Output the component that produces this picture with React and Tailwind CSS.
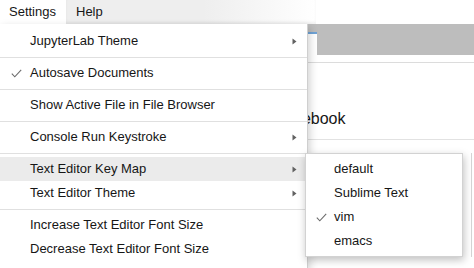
const font = { fontFamily: '"Liberation Sans", Arial, sans-serif' };

function Check() {
  return (
    <svg width="11" height="9" viewBox="0 0 11 9" fill="none">
      <path d="M0.8 4.6 L3.8 7.8 L10.2 0.8" stroke="#6b6b6b" strokeWidth="1.1" />
    </svg>
  );
}

function Arrow() {
  return (
    <svg width="5" height="7" viewBox="0 0 5 7">
      <path d="M0.5 0.5 L4.5 3.5 L0.5 6.5 Z" fill="#616161" />
    </svg>
  );
}

function Item({ label, checked, submenu, active }) {
  return (
    <div className={`flex h-6 items-center pr-[10px] ${active ? "bg-[#ebebeb]" : ""}`}>
      <span className="flex w-[30px] justify-center pl-[2px] pt-px">{checked && <Check />}</span>
      <span className="flex-1 text-[13px] text-[#161616]">{label}</span>
      {submenu && <Arrow />}
    </div>
  );
}

function Sep() {
  return <div className="mt-1 mb-[3px] h-px bg-[#e0e0e0]" />;
}

const keyMaps = [
  { label: "default" },
  { label: "Sublime Text" },
  { label: "vim", checked: true },
  { label: "emacs" },
];

export default function App() {
  return (
    <div className="relative h-[268px] w-[474px] overflow-hidden bg-white" style={font}>
      {/* menubar */}
      <div className="flex h-6 bg-white text-[13px] text-[#161616]">
        <div className="flex w-[66px] items-center justify-center bg-white pr-px">Settings</div>
        <div className="flex w-[250px] items-center bg-[linear-gradient(to_right,#eeeeee_55%,#ffffff_100%)] pl-[10px] shadow-[inset_0_-2px_3px_rgba(0,0,0,0.05)]">
          Help
        </div>
      </div>

      {/* page behind the menu */}
      <div className="flex h-[31px] bg-[#bdbdbd]">
        <div className="w-[160px]" />
        <div className="mt-2 w-[157px] border-t-2 border-[#6fa3d6] bg-white" />
      </div>
      <div className="h-[7px]" />
      <div className="h-px bg-[#dcdcdc]" />
      <div className="flex h-[76px] items-center pl-[277px] pt-[36px]">
        <span className="text-[16px] text-[#161616]">Notebook</span>
      </div>
      <div className="h-px bg-[#e2e2e2]" />
      <div className="mt-[13px] flex h-[104px] justify-end">
        <div className="w-[3px] border-l border-[#d5d5d5]" />
      </div>

      {/* settings menu */}
      <div className="absolute left-0 top-6 w-[308px] border-r border-[#cfcfcf] bg-white pt-[5px] pb-2 shadow-[2px_3px_8px_rgba(0,0,0,0.18)]">
        <Item label="JupyterLab Theme" submenu />
        <Sep />
        <Item label="Autosave Documents" checked />
        <Sep />
        <Item label="Show Active File in File Browser" />
        <Sep />
        <Item label="Console Run Keystroke" submenu />
        <Sep />
        <Item label="Text Editor Key Map" submenu active />
        <Item label="Text Editor Theme" submenu />
        <Sep />
        <Item label="Increase Text Editor Font Size" />
        <Item label="Decrease Text Editor Font Size" />
      </div>

      {/* key map submenu */}
      <div className="absolute left-[305px] top-[153px] w-[158px] border border-[#d2d2d2] bg-white py-[3px] shadow-[1px_3px_8px_rgba(0,0,0,0.25)]">
        {keyMaps.map((k) => (
          <div key={k.label} className="flex h-6 items-center">
            <span className="flex w-[28px] justify-center pl-[2px] pt-px">{k.checked && <Check />}</span>
            <span className="text-[13px] text-[#161616]">{k.label}</span>
          </div>
        ))}
      </div>
    </div>
  );
}
